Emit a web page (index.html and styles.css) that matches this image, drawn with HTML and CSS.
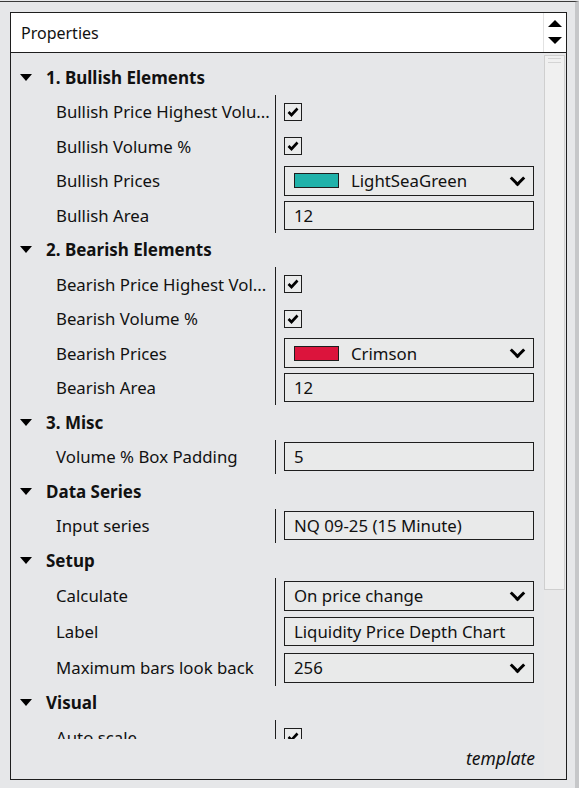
FILE: index.html
```html
<!DOCTYPE html>
<html lang="en">
<head>
    <meta charset="UTF-8">
    <title>Properties</title>
    <link rel="stylesheet" href="styles.css">
</head>
<body>
    <div class="window">
        <div class="panel">
            <div class="header">
                <div class="title">Properties</div>
                <div class="spinner">
                    <svg width="14" height="8" viewBox="0 0 14 8"><path d="M0 7 L7 0 L14 7 Z" fill="#000"/></svg>
                    <svg width="14" height="8" viewBox="0 0 14 8"><path d="M0 0 L14 0 L7 7 Z" fill="#000"/></svg>
                </div>
            </div>
            <div class="body">
                <div class="main">
                    <div class="list">
                        <div class="category first"><span class="caret"></span>1. Bullish Elements</div>
                        <div class="row">
                            <div class="label">Bullish Price Highest Volu...</div>
                            <div class="value"><span class="check"><svg width="12" height="10" viewBox="0 0 12 10"><path d="M1.5 5 L4.5 8 L10.5 1.5" fill="none" stroke="#000" stroke-width="2.6"/></svg></span></div>
                        </div>
                        <div class="row">
                            <div class="label">Bullish Volume %</div>
                            <div class="value"><span class="check"><svg width="12" height="10" viewBox="0 0 12 10"><path d="M1.5 5 L4.5 8 L10.5 1.5" fill="none" stroke="#000" stroke-width="2.6"/></svg></span></div>
                        </div>
                        <div class="row">
                            <div class="label">Bullish Prices</div>
                            <div class="value"><div class="box combo"><span class="swatch teal"></span><span class="text">LightSeaGreen</span><span class="chevron"></span></div></div>
                        </div>
                        <div class="row">
                            <div class="label">Bullish Area</div>
                            <div class="value"><div class="box">12</div></div>
                        </div>

                        <div class="category"><span class="caret"></span>2. Bearish Elements</div>
                        <div class="row">
                            <div class="label">Bearish Price Highest Vol...</div>
                            <div class="value"><span class="check"><svg width="12" height="10" viewBox="0 0 12 10"><path d="M1.5 5 L4.5 8 L10.5 1.5" fill="none" stroke="#000" stroke-width="2.6"/></svg></span></div>
                        </div>
                        <div class="row">
                            <div class="label">Bearish Volume %</div>
                            <div class="value"><span class="check"><svg width="12" height="10" viewBox="0 0 12 10"><path d="M1.5 5 L4.5 8 L10.5 1.5" fill="none" stroke="#000" stroke-width="2.6"/></svg></span></div>
                        </div>
                        <div class="row">
                            <div class="label">Bearish Prices</div>
                            <div class="value"><div class="box combo"><span class="swatch crimson"></span><span class="text">Crimson</span><span class="chevron"></span></div></div>
                        </div>
                        <div class="row">
                            <div class="label">Bearish Area</div>
                            <div class="value"><div class="box">12</div></div>
                        </div>

                        <div class="category"><span class="caret"></span>3. Misc</div>
                        <div class="row">
                            <div class="label">Volume % Box Padding</div>
                            <div class="value"><div class="box">5</div></div>
                        </div>

                        <div class="category"><span class="caret"></span>Data Series</div>
                        <div class="row">
                            <div class="label">Input series</div>
                            <div class="value"><div class="box">NQ 09-25 (15 Minute)</div></div>
                        </div>

                        <div class="category"><span class="caret"></span>Setup</div>
                        <div class="row tall">
                            <div class="label">Calculate</div>
                            <div class="value"><div class="box combo"><span class="text">On price change</span><span class="chevron"></span></div></div>
                        </div>
                        <div class="row tall">
                            <div class="label">Label</div>
                            <div class="value"><div class="box">Liquidity Price Depth Chart</div></div>
                        </div>
                        <div class="row tall">
                            <div class="label">Maximum bars look back</div>
                            <div class="value"><div class="box combo"><span class="text">256</span><span class="chevron"></span></div></div>
                        </div>

                        <div class="category"><span class="caret"></span>Visual</div>
                        <div class="row">
                            <div class="label">Auto scale</div>
                            <div class="value"><span class="check"><svg width="12" height="10" viewBox="0 0 12 10"><path d="M1.5 5 L4.5 8 L10.5 1.5" fill="none" stroke="#000" stroke-width="2.6"/></svg></span></div>
                        </div>
                    </div>
                    <div class="footer">template</div>
                </div>
                <div class="scrollbar">
                    <div class="thumb"><span class="grip"></span><span class="grip"></span></div>
                </div>
            </div>
        </div>
    </div>
</body>
</html>
```

FILE: styles.css
```css
body {
    margin: 0;
    background-color: #e6e7e9;
    font-family: "Noto Sans", "Open Sans", sans-serif;
    font-size: 16.8px;
    color: #111;
}

/* Outer window frame */
.window {
    box-sizing: border-box;
    width: 579px;
    height: 787px;
    margin-top: 1px;
    padding-top: 10px;
    border-top: 1px solid #3a3a3a;
    border-right: 4px solid #c6c7c9;
}

.panel {
    box-sizing: border-box;
    margin-left: 10px;
    width: 557px;
    height: 768px;
    border: 1px solid #1e1e1e;
    display: flex;
    flex-direction: column;
}

/* Header with title and spinner */
.header {
    height: 39px;
    background-color: #fff;
    border-bottom: 1px solid #1e1e1e;
    display: flex;
}

.title {
    flex: 1;
    padding-left: 10px;
    display: flex;
    align-items: center;
    font-size: 16px;
}

.spinner {
    width: 22px;
    border-left: 1px solid #e2e2e2;
    display: flex;
    flex-direction: column;
    align-items: center;
    justify-content: center;
    gap: 9px;
}

.body {
    flex: 1;
    display: flex;
    min-height: 0;
}

.main {
    flex: 1;
    display: flex;
    flex-direction: column;
    min-width: 0;
}

/* Property grid */
.list {
    height: 686px;
    overflow: hidden;
    padding-top: 7px;
    box-sizing: border-box;
}

.category {
    height: 34.5px;
    display: flex;
    align-items: center;
    font-weight: bold;
    font-size: 17px;
    padding-left: 9px;
}

.caret {
    width: 0;
    height: 0;
    border-left: 6.5px solid transparent;
    border-right: 6.5px solid transparent;
    border-top: 7px solid #000;
    margin-right: 14px;
}

.row {
    height: 34.5px;
    display: grid;
    grid-template-columns: 265px 1fr;
}

.row.tall {
    height: 36px;
}

.label {
    padding-left: 45px;
    border-right: 1px solid #1e1e1e;
    display: flex;
    align-items: center;
    white-space: nowrap;
    overflow: hidden;
}

.value {
    padding-left: 8px;
    padding-right: 10px;
    display: flex;
    align-items: center;
}

.check {
    box-sizing: border-box;
    width: 18px;
    height: 18px;
    border: 1px solid #1e1e1e;
    background-color: #eaebeb;
    display: flex;
    align-items: center;
    justify-content: center;
}

.box {
    box-sizing: border-box;
    flex: 1;
    height: 29px;
    border: 1px solid #1e1e1e;
    background-color: #e9eaea;
    padding-left: 9px;
    display: flex;
    align-items: center;
    white-space: nowrap;
}

.combo {
    height: 30px;
}

.combo .text {
    flex: 1;
}

.swatch {
    box-sizing: border-box;
    width: 45px;
    height: 15px;
    border: 1px solid #1e1e1e;
    margin-right: 12px;
}

.swatch.teal {
    background-color: #20b2aa;
}

.swatch.crimson {
    background-color: #dc143c;
}

.chevron {
    width: 8px;
    height: 8px;
    border-right: 3px solid #000;
    border-bottom: 3px solid #000;
    transform: rotate(45deg);
    margin: -5px 10px 0 0;
}

.footer {
    flex: 1;
    display: flex;
    align-items: center;
    justify-content: flex-end;
    padding-right: 9px;
    padding-bottom: 3px;
    font-style: italic;
    font-size: 17.5px;
}

/* Scrollbar */
.scrollbar {
    width: 22px;
    background-color: #e8e8e9;
    padding-top: 2px;
}

.thumb {
    box-sizing: border-box;
    width: 21px;
    height: 535px;
    background-color: #f0f0f0;
    border: 1px solid #cfcfcf;
    display: flex;
    flex-direction: column;
    align-items: center;
    padding-top: 2px;
    gap: 3px;
}

.grip {
    width: 13px;
    height: 1px;
    background-color: #d4d4d4;
}
```
